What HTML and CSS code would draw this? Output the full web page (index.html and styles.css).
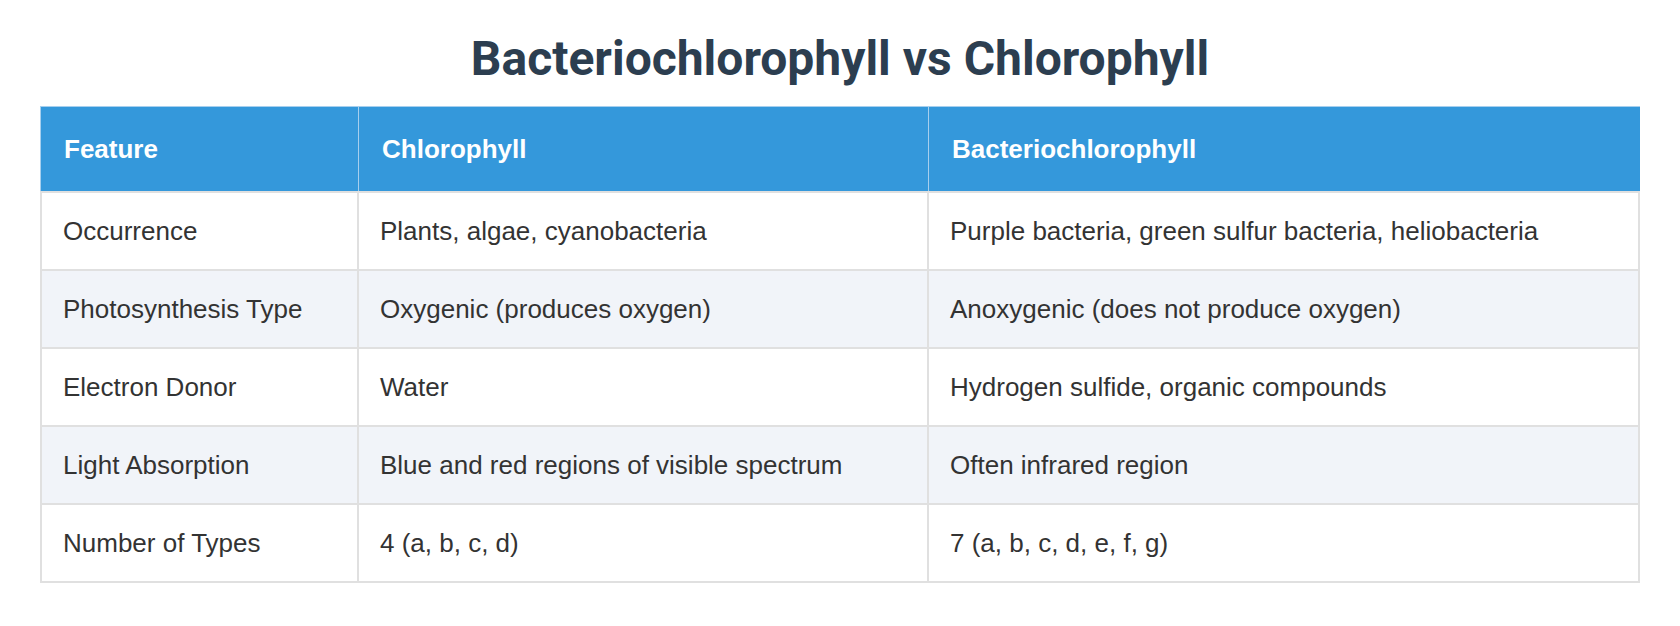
FILE: index.html
```html
<!DOCTYPE html>
<html lang="en">
<head>
<meta charset="utf-8">
<title>Bacteriochlorophyll vs Chlorophyll</title>
<link rel="stylesheet" href="styles.css">
</head>
<body>
<main class="page">
  <h1 class="title">Bacteriochlorophyll vs Chlorophyll</h1>
  <table class="compare">
    <colgroup>
      <col class="c1">
      <col class="c2">
      <col class="c3">
    </colgroup>
    <thead>
      <tr>
        <th>Feature</th>
        <th>Chlorophyll</th>
        <th>Bacteriochlorophyll</th>
      </tr>
    </thead>
    <tbody>
      <tr>
        <td>Occurrence</td>
        <td>Plants, algae, cyanobacteria</td>
        <td>Purple bacteria, green sulfur bacteria, heliobacteria</td>
      </tr>
      <tr>
        <td>Photosynthesis Type</td>
        <td>Oxygenic (produces oxygen)</td>
        <td>Anoxygenic (does not produce oxygen)</td>
      </tr>
      <tr>
        <td>Electron Donor</td>
        <td>Water</td>
        <td>Hydrogen sulfide, organic compounds</td>
      </tr>
      <tr>
        <td>Light Absorption</td>
        <td>Blue and red regions of visible spectrum</td>
        <td>Often infrared region</td>
      </tr>
      <tr>
        <td>Number of Types</td>
        <td>4 (a, b, c, d)</td>
        <td>7 (a, b, c, d, e, f, g)</td>
      </tr>
    </tbody>
  </table>
</main>
</body>
</html>
```
FILE: styles.css
```css
html, body {
  margin: 0;
  padding: 0;
  background: #ffffff;
}

.page {
  padding: 30px 40px 0;
  font-family: "Liberation Sans", Arial, sans-serif;
}

.title {
  margin: 0 0 19px;
  font-family: Roboto, "Liberation Sans", sans-serif;
  font-weight: 700;
  font-size: 48px;
  line-height: 57px;
  color: #2c3e50;
  text-align: center;
}

.compare {
  width: 100%;
  table-layout: fixed;
  border-collapse: separate;
  border-spacing: 0;
  font-size: 26px;
  line-height: 30px;
}

.c1 { width: 319px; }
.c2 { width: 570px; }
.c3 { width: 711px; }

.compare th {
  background: #3498db;
  color: #ffffff;
  font-weight: 700;
  text-align: left;
  padding: 27px 20px 27px 23px;
  border-top: 1px solid #a6cfee;
  border-right: 1px solid #a6cfee;
}

.compare th:first-child {
  border-left: 1px solid #a6cfee;
}

.compare th:last-child {
  border-right: none;
}

.compare td {
  color: #333333;
  text-align: left;
  padding: 23px 20px 23px 21px;
  border-bottom: 2px solid #e0e0e0;
  border-right: 2px solid #e0e0e0;
}

.compare td:first-child {
  border-left: 2px solid #e0e0e0;
}

.compare tbody tr:first-child td {
  border-top: 2px solid #e0e0e0;
}

.compare tbody tr:nth-child(even) td {
  background: #f1f4f9;
}
```
